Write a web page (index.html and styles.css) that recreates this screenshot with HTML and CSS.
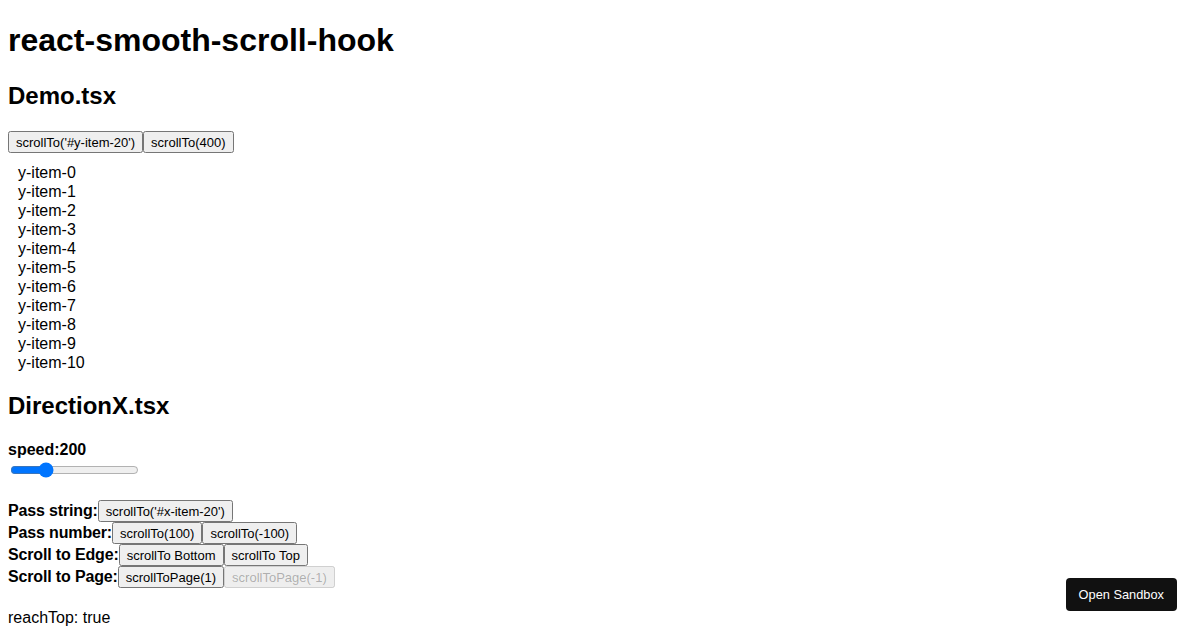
FILE: index.html
```html
<!DOCTYPE html>
<html>
<head>
<meta charset="utf-8">
<link rel="stylesheet" href="styles.css">
</head>
<body>
<h1>react-smooth-scroll-hook</h1>
<h2>Demo.tsx</h2>
<div class="btns">
  <button>scrollTo('#y-item-20')</button><button>scrollTo(400)</button>
</div>
<div class="yscroll">
  <div class="item">y-item-0</div>
  <div class="item">y-item-1</div>
  <div class="item">y-item-2</div>
  <div class="item">y-item-3</div>
  <div class="item">y-item-4</div>
  <div class="item">y-item-5</div>
  <div class="item">y-item-6</div>
  <div class="item">y-item-7</div>
  <div class="item">y-item-8</div>
  <div class="item">y-item-9</div>
  <div class="item">y-item-10</div>
</div>
<h2>DirectionX.tsx</h2>
<div class="speed">
  <strong>speed:200</strong>
  <input class="range" type="range" min="0" max="800" value="200">
</div>
<div class="rows">
  <div class="row"><strong class="label">Pass string:</strong><button>scrollTo('#x-item-20')</button></div>
  <div class="row"><strong class="label">Pass number:</strong><button>scrollTo(100)</button><button>scrollTo(-100)</button></div>
  <div class="row"><strong class="label">Scroll to Edge:</strong><button>scrollTo Bottom</button><button>scrollTo Top</button></div>
  <div class="row"><strong class="label">Scroll to Page:</strong><button>scrollToPage(1)</button><button disabled>scrollToPage(-1)</button></div>
</div>
<div class="status">reachTop: true</div>
<button class="sandbox">Open Sandbox</button>
</body>
</html>
```

FILE: styles.css
```css
html {
  overflow: hidden;
}
body {
  margin: 0 8px 8px;
  font-family: "Liberation Sans", Arial, sans-serif;
  font-size: 16px;
  color: #000;
  background: #fff;
}
h1 {
  font-size: 32px;
  line-height: 39px;
  margin: 21px 0;
}
h2 {
  font-size: 24px;
  line-height: 30px;
  margin: 20px 0;
}
button {
  font-family: "Liberation Sans", Arial, sans-serif;
  font-size: 13px;
  height: 22px;
  padding: 0 6px;
}
.btns {
  display: flex;
}
.yscroll {
  padding: 10px 10px 0;
  height: 208px;
  overflow: hidden;
}
.item {
  line-height: 19px;
}
.speed {
  display: flex;
  flex-direction: column;
  align-items: flex-start;
}
.range {
  width: 129px;
  margin: 3px 2px 2px;
}
.rows {
  margin-top: 20px;
}
.row {
  display: flex;
  align-items: center;
  height: 22px;
}
.label {
  letter-spacing: -0.15px;
}
.status {
  margin-top: 21px;
}
.sandbox {
  position: fixed;
  right: 23px;
  bottom: 19px;
  background: #111;
  color: #fff;
  border: none;
  border-radius: 4px;
  padding: 0 13px;
  height: 33px;
  white-space: nowrap;
  font-family: "Liberation Sans", Arial, sans-serif;
  font-size: 12.8px;
}
```
